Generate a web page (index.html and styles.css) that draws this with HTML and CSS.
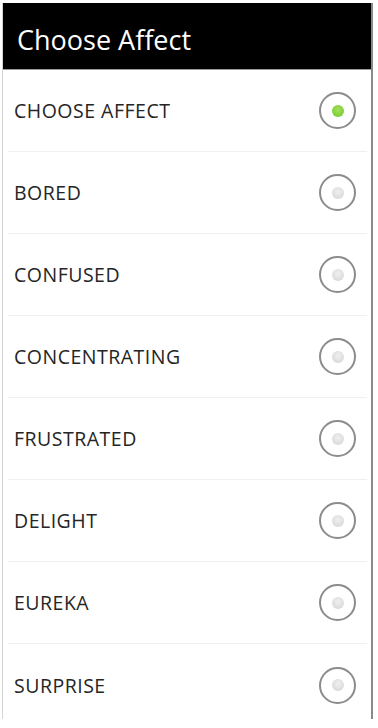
FILE: index.html
```html
<!DOCTYPE html>
<html>
<head>
<meta charset="utf-8">
<link rel="stylesheet" href="styles.css">
</head>
<body>
<div class="frame">
  <div class="header">Choose Affect</div>
  <ul class="list">
    <li class="row"><span class="label">CHOOSE AFFECT</span><span class="radio checked"></span></li>
    <li class="row"><span class="label">BORED</span><span class="radio"></span></li>
    <li class="row"><span class="label">CONFUSED</span><span class="radio"></span></li>
    <li class="row"><span class="label">CONCENTRATING</span><span class="radio"></span></li>
    <li class="row"><span class="label">FRUSTRATED</span><span class="radio"></span></li>
    <li class="row"><span class="label">DELIGHT</span><span class="radio"></span></li>
    <li class="row"><span class="label">EUREKA</span><span class="radio"></span></li>
    <li class="row last"><span class="label">SURPRISE</span><span class="radio"></span></li>
  </ul>
</div>
</body>
</html>
```
FILE: styles.css
```css
html, body {
  margin: 0;
  padding: 0;
  background: #ffffff;
}
body {
  padding: 3px 0 0 2px;
  font-family: "Open Sans", Roboto, "Liberation Sans", sans-serif;
}
.frame {
  width: 368px;
  height: 716px;
  border-left: 1px solid #d4d4d4;
  border-right: 2px solid #8a8a8a;
  box-sizing: content-box;
}
.header {
  height: 67px;
  background: #000000;
  color: #ffffff;
  font-size: 27px;
  line-height: 30px;
  padding: 22px 0 0 14px;
  box-sizing: border-box;
  border-bottom: 1px solid #9a9a9a;
}
.list {
  list-style: none;
  margin: 0;
  padding: 0;
}
.row {
  height: 82px;
  margin: 0 4px 0 5px;
  border-bottom: 1px solid #f0f0f0;
  display: flex;
  align-items: center;
  justify-content: space-between;
  padding: 0 11px 0 6px;
  box-sizing: border-box;
}
.row.last {
  border-bottom: none;
}
.label {
  font-size: 19.5px;
  letter-spacing: 0.5px;
  color: #252525;
}
.radio {
  width: 33px;
  height: 33px;
  border: 2px solid #8c8c8c;
  border-radius: 50%;
  display: flex;
  align-items: center;
  justify-content: center;
  box-sizing: content-box;
}
.radio::after {
  content: "";
  width: 12px;
  height: 12px;
  border-radius: 50%;
  background: radial-gradient(circle at 50% 40%, #f0f0f0, #d2d2d2);
}
.radio.checked::after {
  background: radial-gradient(circle at 50% 40%, #a4e05a, #6cc82a);
}
```
